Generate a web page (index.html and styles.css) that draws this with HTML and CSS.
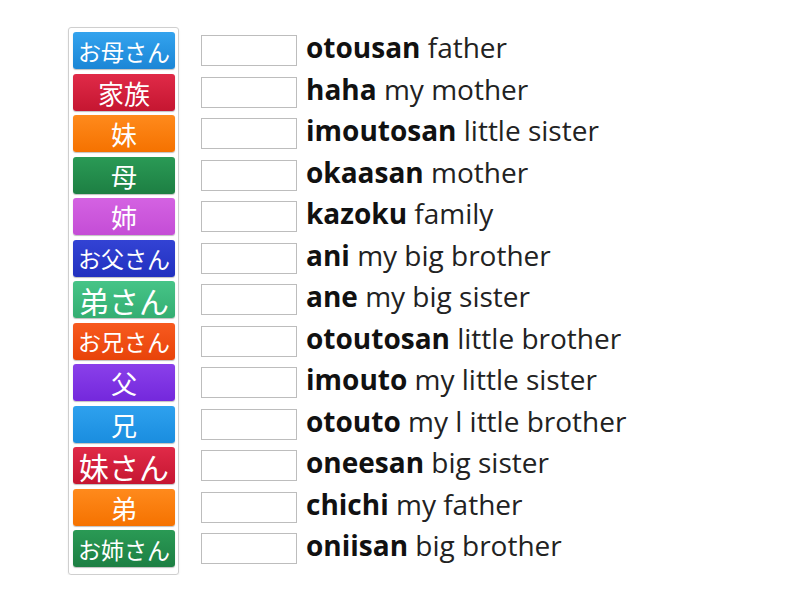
FILE: index.html
```html
<!DOCTYPE html>
<html>
<head>
<meta charset="utf-8">
<link rel="stylesheet" href="styles.css">
</head>
<body>
<div class="page">
  <div class="tiles">
    <div class="tile c-blue s4">お母さん</div>
    <div class="tile c-red">家族</div>
    <div class="tile c-orange">妹</div>
    <div class="tile c-green">母</div>
    <div class="tile c-violet">姉</div>
    <div class="tile c-navy s4">お父さん</div>
    <div class="tile c-mint s3">弟さん</div>
    <div class="tile c-vermil s4">お兄さん</div>
    <div class="tile c-purple">父</div>
    <div class="tile c-sky">兄</div>
    <div class="tile c-red s3">妹さん</div>
    <div class="tile c-orange">弟</div>
    <div class="tile c-green s4">お姉さん</div>
  </div>
  <div class="rows">
    <div class="row"><div class="slot"></div><div class="label"><b>otousan</b> father</div></div>
    <div class="row"><div class="slot"></div><div class="label"><b>haha</b> my mother</div></div>
    <div class="row"><div class="slot"></div><div class="label"><b>imoutosan</b> little sister</div></div>
    <div class="row"><div class="slot"></div><div class="label"><b>okaasan</b> mother</div></div>
    <div class="row"><div class="slot"></div><div class="label"><b>kazoku</b> family</div></div>
    <div class="row"><div class="slot"></div><div class="label"><b>ani</b> my big brother</div></div>
    <div class="row"><div class="slot"></div><div class="label"><b>ane</b> my big sister</div></div>
    <div class="row"><div class="slot"></div><div class="label"><b>otoutosan</b> little brother</div></div>
    <div class="row"><div class="slot"></div><div class="label"><b>imouto</b> my little sister</div></div>
    <div class="row"><div class="slot"></div><div class="label"><b>otouto</b> my l ittle brother</div></div>
    <div class="row"><div class="slot"></div><div class="label"><b>oneesan</b> big sister</div></div>
    <div class="row"><div class="slot"></div><div class="label"><b>chichi</b> my father</div></div>
    <div class="row"><div class="slot"></div><div class="label"><b>oniisan</b> big brother</div></div>
  </div>
</div>
</body>
</html>
```
FILE: styles.css
```css
html, body {
  margin: 0;
  padding: 0;
  background: #fff;
}
.page {
  display: flex;
  align-items: flex-start;
  padding: 27px 0 0 68px;
  font-family: "Open Sans", "Noto Sans", sans-serif;
}
.tiles {
  display: flex;
  flex-direction: column;
  gap: 4.5px;
  border: 1px solid #cfcfcf;
  border-radius: 3px;
  padding: 4px 3px 7px 4px;
  box-shadow: 0 1px 2px rgba(0,0,0,0.08);
}
.tile {
  width: 102px;
  height: 37px;
  border-radius: 3px;
  color: #fff;
  font-family: "Noto Sans CJK JP", sans-serif;
  font-size: 26px;
  display: flex;
  align-items: center;
  justify-content: center;
  white-space: nowrap;
  box-shadow: 0 1px 1px rgba(0,0,0,0.25);
}
.s4 { font-size: 23px; }
.s3 { font-size: 30px; }
.c-blue   { background: linear-gradient(#33a3ee, #1b86d6); }
.c-red    { background: linear-gradient(#e02a48, #c51631); }
.c-orange { background: linear-gradient(#ff8a1c, #f57200); }
.c-green  { background: linear-gradient(#2a9a55, #1d7f43); }
.c-violet { background: linear-gradient(#d462e2, #c44dd6); }
.c-navy   { background: linear-gradient(#3343d4, #2130bf); }
.c-mint   { background: linear-gradient(#46c487, #34ae72); }
.c-vermil { background: linear-gradient(#f75a1f, #e84309); }
.c-purple { background: linear-gradient(#8a40ea, #7428dc); }
.c-sky    { background: linear-gradient(#2ea1ee, #1a8ddf); }
.rows {
  display: flex;
  flex-direction: column;
  gap: 4.5px;
  margin-left: 22px;
  padding-top: 5px;
}
.row {
  height: 37px;
  display: flex;
  align-items: center;
}
.slot {
  width: 96px;
  height: 31px;
  box-sizing: border-box;
  border: 1px solid #bdbdbd;
  background: #fff;
  flex: none;
}
.label {
  margin-left: 9px;
  margin-top: -6px;
  font-size: 28px;
  color: #222;
  white-space: nowrap;
  line-height: 37px;
}
.label b {
  font-weight: 700;
  color: #111;
}
```
